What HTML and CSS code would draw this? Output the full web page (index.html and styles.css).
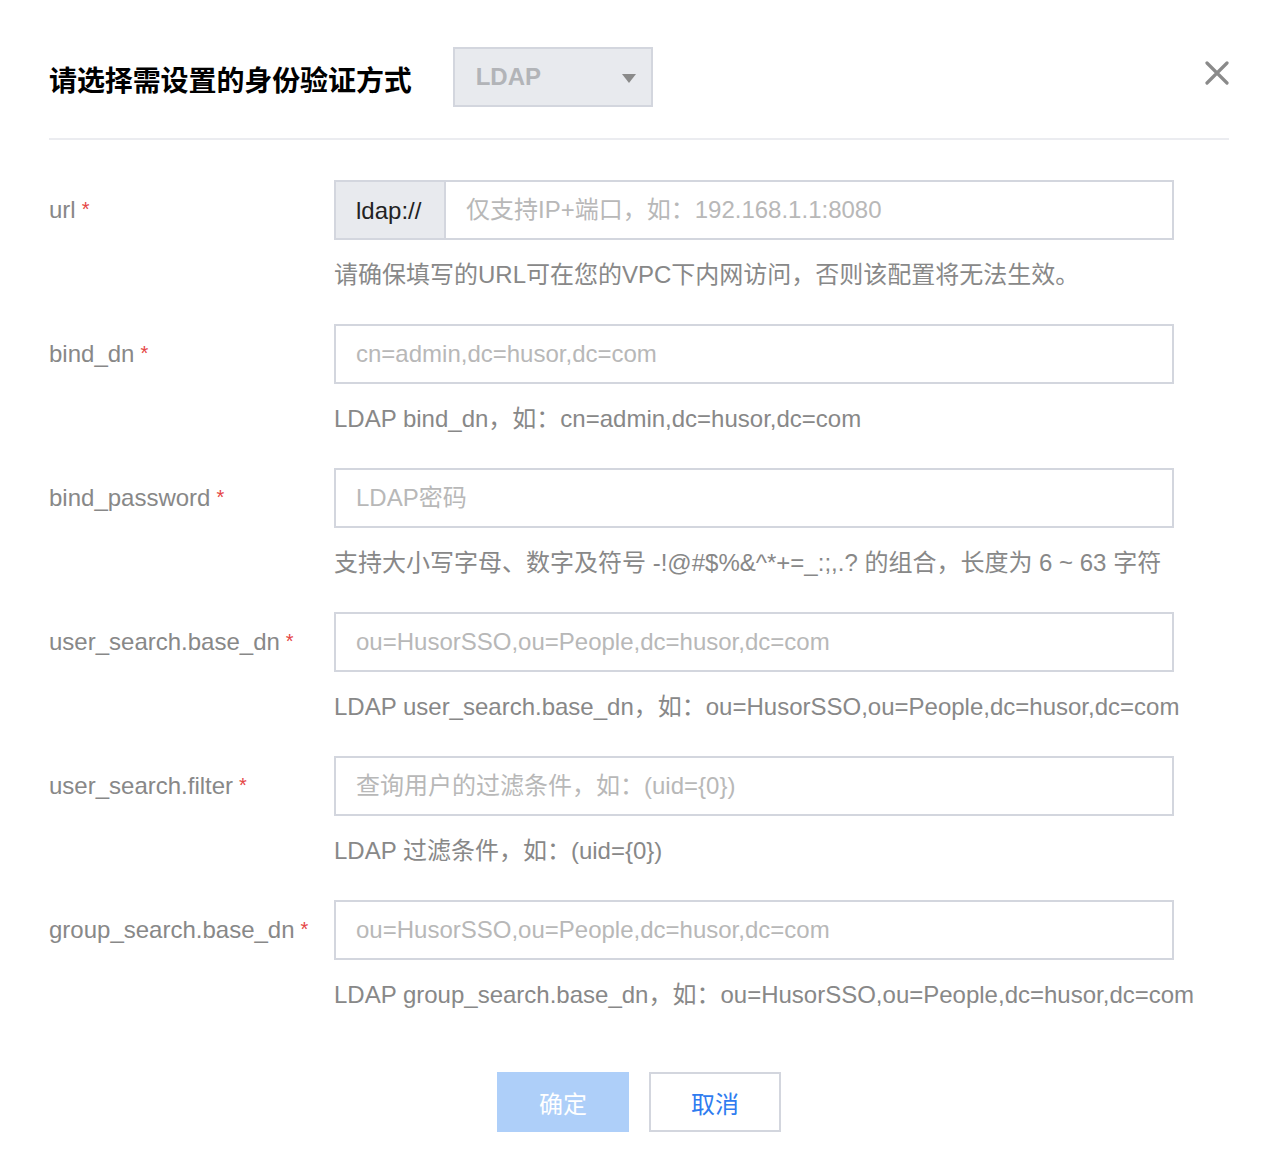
FILE: index.html
```html
<!DOCTYPE html>
<html lang="zh-CN">
<head>
<meta charset="utf-8">
<title>身份验证方式</title>
<link rel="stylesheet" href="styles.css">
</head>
<body>
<div class="dialog">
  <div class="header">
    <h2 class="title">请选择需设置的身份验证方式</h2>
    <div class="select"><span class="select-value">LDAP</span><span class="caret"></span></div>
    <button class="close" type="button" aria-label="关闭">
      <svg width="24" height="24" viewBox="0 0 24 24"><path d="M2 2 L22 22 M22 2 L2 22" stroke="#8a8a8a" stroke-width="3.2" stroke-linecap="round" fill="none"/></svg>
    </button>
  </div>
  <div class="divider"></div>
  <form class="form">
    <div class="row">
      <label class="label">url<span class="req">*</span></label>
      <div class="field">
        <div class="input-group"><span class="addon">ldap://</span><input class="input" placeholder="仅支持IP+端口，如：192.168.1.1:8080"></div>
        <p class="hint">请确保填写的URL可在您的VPC下内网访问，否则该配置将无法生效。</p>
      </div>
    </div>
    <div class="row">
      <label class="label">bind_dn<span class="req">*</span></label>
      <div class="field">
        <div class="input-group"><input class="input" placeholder="cn=admin,dc=husor,dc=com"></div>
        <p class="hint">LDAP bind_dn，如：cn=admin,dc=husor,dc=com</p>
      </div>
    </div>
    <div class="row">
      <label class="label">bind_password<span class="req">*</span></label>
      <div class="field">
        <div class="input-group"><input class="input" placeholder="LDAP密码"></div>
        <p class="hint">支持大小写字母、数字及符号 -!@#$%&amp;^*+=_:;,.? 的组合，长度为 6 ~ 63 字符</p>
      </div>
    </div>
    <div class="row">
      <label class="label">user_search.base_dn<span class="req">*</span></label>
      <div class="field">
        <div class="input-group"><input class="input" placeholder="ou=HusorSSO,ou=People,dc=husor,dc=com"></div>
        <p class="hint">LDAP user_search.base_dn，如：ou=HusorSSO,ou=People,dc=husor,dc=com</p>
      </div>
    </div>
    <div class="row">
      <label class="label">user_search.filter<span class="req">*</span></label>
      <div class="field">
        <div class="input-group"><input class="input" placeholder="查询用户的过滤条件，如：(uid={0})"></div>
        <p class="hint">LDAP 过滤条件，如：(uid={0})</p>
      </div>
    </div>
    <div class="row">
      <label class="label">group_search.base_dn<span class="req">*</span></label>
      <div class="field">
        <div class="input-group"><input class="input" placeholder="ou=HusorSSO,ou=People,dc=husor,dc=com"></div>
        <p class="hint">LDAP group_search.base_dn，如：ou=HusorSSO,ou=People,dc=husor,dc=com</p>
      </div>
    </div>
  </form>
  <div class="footer">
    <button class="btn btn-primary" type="button">确定</button>
    <button class="btn btn-default" type="button">取消</button>
  </div>
</div>
</body>
</html>
```

FILE: styles.css
```css
* { box-sizing: border-box; }

body {
  margin: 0;
  background: #fff;
  font-family: "Liberation Sans", "Noto Sans CJK SC", sans-serif;
  font-size: 24px;
  color: #222;
}

.dialog {
  width: 1275px;
  padding: 47px 46px 40px 49px;
}

.header {
  display: flex;
  align-items: center;
  height: 60px;
}

.title {
  margin: 3px 41px 0 0;
  font-size: 28px;
  line-height: 36px;
  font-weight: 700;
  color: #000;
  font-family: "Noto Sans CJK SC", sans-serif;
  letter-spacing: -0.1px;
}

.select {
  width: 200px;
  height: 60px;
  border: 2px solid #d3d6de;
  background: #e8eaee;
  display: flex;
  align-items: center;
  justify-content: space-between;
  padding: 0 15px 0 21px;
}

.select-value {
  font-weight: 700;
  color: #b2b4b8;
  font-size: 24px;
}

.caret {
  width: 0;
  height: 0;
  border-left: 7px solid transparent;
  border-right: 7px solid transparent;
  border-top: 9px solid #8a8a8a;
  margin-top: 2px;
}

.close {
  margin-left: auto;
  margin-bottom: 8px;
  padding: 0;
  border: 0;
  background: none;
  width: 24px;
  height: 24px;
  display: flex;
}

.divider {
  margin-top: 31px;
  height: 2px;
  background: #ebecf0;
}

.form {
  margin-top: 40px;
}

.row {
  display: grid;
  grid-template-columns: 285px 840px;
}

.label {
  line-height: 60px;
  color: #888;
  white-space: nowrap;
}

.req {
  color: #e54545;
  font-size: 20px;
  margin-left: 6px;
  position: relative;
  top: -2px;
}

.input-group {
  display: flex;
  height: 60px;
  border: 2px solid #d3d6de;
  background: #fff;
}

.addon {
  width: 110px;
  flex: none;
  background: #e8eaee;
  border-right: 2px solid #d3d6de;
  padding-left: 20px;
  line-height: 58px;
  color: #222;
}

.input {
  flex: 1;
  min-width: 0;
  border: 0;
  outline: none;
  padding: 0 20px;
  font: inherit;
  font-size: 24px;
  color: #222;
  background: transparent;
}

.input::placeholder {
  color: #b8b8b8;
}

.hint {
  margin: 0;
  padding: 22px 0 38px;
  line-height: 26px;
  height: 84px;
  color: #888;
  white-space: nowrap;
}

.footer {
  margin-top: 28px;
  display: flex;
  justify-content: center;
  gap: 20px;
}

.btn {
  width: 132px;
  height: 60px;
  font-family: "Noto Sans CJK SC", sans-serif;
  font-size: 24px;
  padding: 0;
  cursor: pointer;
}

.btn-primary {
  background: #aecff9;
  border: 0;
  color: #fff;
}

.btn-default {
  background: #fff;
  border: 2px solid #d3d6de;
  color: #2f7cf0;
}
```
